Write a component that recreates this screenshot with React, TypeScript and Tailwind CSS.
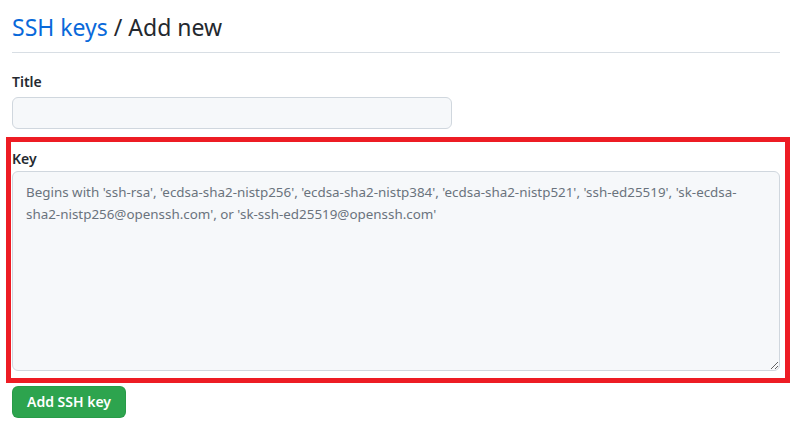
import React from 'react';

const font = { fontFamily: '"Noto Sans", "Open Sans", sans-serif' };

export default function App() {
  return (
    <div className="min-h-screen bg-white px-3 text-[#24292f]" style={font}>
      {/* Header */}
      <div className="flex items-center h-[53px] pt-[3px] border-b border-[#d8dee4]">
        <h2 className="text-[23px] font-normal leading-none">
          <a className="text-[#0969da]">SSH keys</a> / Add new
        </h2>
      </div>

      <form className="flex flex-col">
        <div className="pt-[19px]">
          <label className="block text-sm font-semibold leading-5">Title</label>
          <input
            type="text"
            className="mt-[5px] block w-[440px] h-8 rounded-md border border-[#d0d7de] bg-[#f6f8fa] px-3 text-sm"
          />
        </div>

        {/* highlighted field */}
        <div className="-ml-[6px] -mr-[10px] mt-2 border-[5px] border-[#ed1c24] pl-[1px] pr-[5px] pt-[7px] pb-[7px]">
          <label className="block text-sm font-semibold leading-5">Key</label>
          <textarea
            className="mt-[2px] block w-full h-[200px] rounded-md border border-[#d0d7de] bg-[#f6f8fa] px-[13px] py-[9px] text-[13.4px] leading-[22px] placeholder:text-[#6a737d] resize-y"
            placeholder="Begins with 'ssh-rsa', 'ecdsa-sha2-nistp256', 'ecdsa-sha2-nistp384', 'ecdsa-sha2-nistp521', 'ssh-ed25519', 'sk-ecdsa-sha2-nistp256@openssh.com', or 'sk-ssh-ed25519@openssh.com'"
          />
        </div>

        <div className="pt-[3px]">
          <button
            type="button"
            className="h-8 w-[114px] rounded-md border border-[#1f883d]/30 bg-[#2da44e] text-sm font-semibold text-white"
          >
            Add SSH key
          </button>
        </div>
      </form>
    </div>
  );
}
